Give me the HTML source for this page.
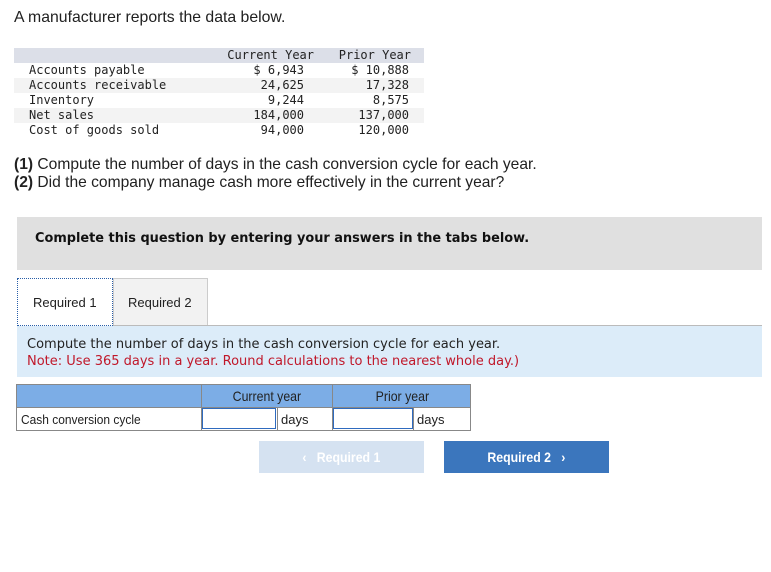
<!DOCTYPE html>
<html><head><meta charset="utf-8"><style>
body{margin:0;width:771px;height:572px;background:#fff;position:relative;font-family:"Liberation Sans",Arial,sans-serif;color:#212121;overflow:hidden}
.a{position:absolute;white-space:nowrap}
.m{font-family:"DejaVu Sans Mono","Liberation Mono",monospace;font-size:12px;color:#222}
.r{text-align:right}
.n{display:inline-block;transform:scaleX(0.88);transform-origin:center}
</style></head><body>
<div class="a" style="left:14px;top:9px;font-size:15.8px">A manufacturer reports the data below.</div>

<div class="a" style="left:14px;top:48px;width:410px;height:15px;background:#dcdfe8"></div>
<div class="a" style="left:14px;top:78px;width:410px;height:15px;background:#f3f3f3"></div>
<div class="a" style="left:14px;top:108px;width:410px;height:15px;background:#f3f3f3"></div>
<div class="a m r" style="left:200px;width:114px;top:48px">Current Year</div>
<div class="a m r" style="left:320px;width:91px;top:48px">Prior Year</div>
<div class="a m" style="left:29px;top:63px;line-height:15px">Accounts payable<br>Accounts receivable<br>Inventory<br>Net sales<br>Cost of goods sold</div>
<div class="a m r" style="left:200px;width:104px;top:63px;line-height:15px">$ 6,943<br>24,625<br>9,244<br>184,000<br>94,000</div>
<div class="a m r" style="left:320px;width:89px;top:63px;line-height:15px">$ 10,888<br>17,328<br>8,575<br>137,000<br>120,000</div>

<div class="a" style="left:14px;top:156px;font-size:15.6px;line-height:18px"><b>(1)</b> Compute the number of days in the cash conversion cycle for each year.<br><b>(2)</b> Did the company manage cash more effectively in the current year?</div>

<div class="a" style="left:17px;top:217px;width:745px;height:53px;background:#e0e0e0"></div>
<div class="a" style="left:35px;top:231px;font-family:'DejaVu Sans',Verdana,sans-serif;font-weight:bold;font-size:12.9px;color:#111">Complete this question by entering your answers in the tabs below.</div>

<div class="a" style="left:113px;top:278px;width:93px;height:47px;background:#f2f2f2;border:1px solid #ccc;border-bottom:none"></div>
<div class="a" style="left:17px;top:278px;width:94px;height:46px;border:1px dotted #2a5ea8;background:#fff"></div>
<div class="a" style="left:33px;top:295px;font-size:13px">Required 1</div>
<div class="a" style="left:128px;top:295px;font-size:13px">Required 2</div>
<div class="a" style="left:113px;top:325px;width:649px;height:1px;background:#bbb"></div>
<div class="a" style="left:17px;top:326px;width:745px;height:51px;background:#dcecf9"></div>
<div class="a" style="left:27px;top:336px;font-family:'DejaVu Sans',Verdana,sans-serif;font-size:13px;line-height:17px;color:#222">Compute the number of days in the cash conversion cycle for each year.<br><span style="color:#c0182a">Note: Use 365 days in a year. Round calculations to the nearest whole day.)</span></div>

<div class="a" style="left:16px;top:384px;width:455px;height:47px;border:1px solid #888;box-sizing:border-box"></div>
<div class="a" style="left:17px;top:385px;width:453px;height:22px;background:#7cade6"></div>
<div class="a" style="left:16px;top:407px;width:455px;height:1px;background:#888"></div>
<div class="a" style="left:201px;top:384px;width:1px;height:47px;background:#888"></div>
<div class="a" style="left:332px;top:384px;width:1px;height:47px;background:#888"></div>
<div class="a" style="left:202px;top:388px;width:130px;text-align:center;font-size:14px;color:#222"><span class="n">Current year</span></div>
<div class="a" style="left:333px;top:388px;width:138px;text-align:center;font-size:14px;color:#222"><span class="n">Prior year</span></div>
<div class="a" style="left:21px;top:412px;font-size:13px;transform:scaleX(0.92);transform-origin:left">Cash conversion cycle</div>
<div class="a" style="left:202px;top:408px;width:74px;height:21px;border:1px solid #2f6bbf;box-sizing:border-box"></div>
<div class="a" style="left:333px;top:408px;width:80px;height:21px;border:1px solid #2f6bbf;box-sizing:border-box"></div>
<div class="a" style="left:277px;top:408px;width:1px;height:22px;background:#888"></div>
<div class="a" style="left:413px;top:408px;width:1px;height:22px;background:#888"></div>
<div class="a" style="left:281px;top:412px;font-size:13px">days</div>
<div class="a" style="left:417px;top:412px;font-size:13px">days</div>

<div class="a" style="left:259px;top:441px;width:165px;height:32px;background:#d5e2f1;color:#fff;font-weight:bold;font-size:14px;line-height:32px;text-align:center"><span class="n">&#8249;&nbsp;&nbsp; Required 1</span></div>
<div class="a" style="left:444px;top:441px;width:165px;height:32px;background:#3b76bd;color:#fff;font-weight:bold;font-size:14px;line-height:32px;text-align:center"><span class="n">Required 2 &nbsp;&nbsp;&#8250;</span></div>
</body></html>
